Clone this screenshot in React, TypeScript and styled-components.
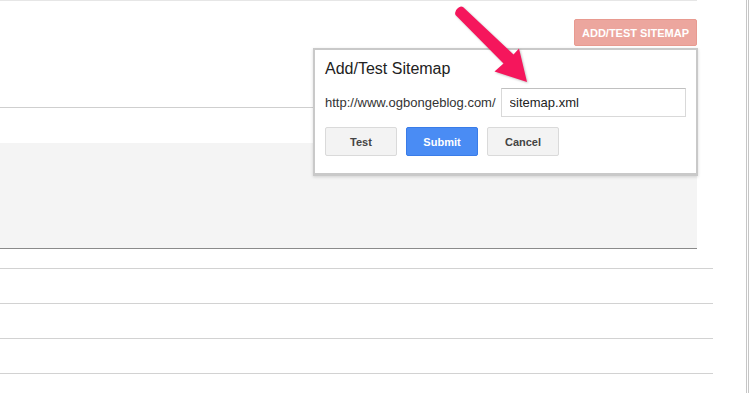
import React from "react";
import styled, { createGlobalStyle } from "styled-components";

const Global = createGlobalStyle`
  html, body { margin: 0; padding: 0; background: #fff; }
  body { font-family: "Liberation Sans", Arial, sans-serif; }
  * { box-sizing: border-box; }
`;

const Frame = styled.div`
  position: relative;
  width: 749px;
  height: 393px;
  overflow: hidden;
  display: flex;
  background: #fff;
`;

const Main = styled.div`
  width: 746px;
  display: flex;
  flex-direction: column;
`;

const WindowEdge = styled.div`
  width: 3px;
  border-left: 1px solid #c6c6c6;
  border-right: 1px solid #c6c6c6;
  background: #fff;
`;

const Header = styled.div`
  width: 697px;
  height: 108px;
  border-top: 1px solid #e6e6e6;
  border-bottom: 1px solid #cfcfcf;
  display: flex;
  justify-content: flex-end;
  align-items: flex-start;
  padding-top: 18px;
`;

const AddButton = styled.button`
  height: 27px;
  width: 123px;
  padding: 0;
  background: #eca69e;
  border: 1px solid #e89a90;
  border-radius: 2px;
  color: #fff;
  font-family: "Liberation Sans", Arial, sans-serif;
  font-weight: bold;
  font-size: 11px;
  text-transform: uppercase;
`;

const Panel = styled.div`
  width: 697px;
  height: 106px;
  margin-top: 35px;
  background: #f4f4f4;
  border-bottom: 1px solid #8a8a8a;
`;

const RowList = styled.div`
  width: 713px;
  margin-top: 19px;
  border-top: 1px solid #d2d2d2;
`;

const Row = styled.div`
  height: 35px;
  border-bottom: 1px solid #d2d2d2;
`;

const Dialog = styled.div`
  position: absolute;
  left: 313px;
  top: 48px;
  width: 385px;
  height: 128px;
  background: #fff;
  border: 2px solid #c9c9c9;
  border-bottom-width: 3px;
  box-shadow: 0 1px 3px rgba(0, 0, 0, 0.15);
  padding: 9px 10px 0 10px;
  display: flex;
  flex-direction: column;
`;

const Title = styled.div`
  font-size: 16px;
  line-height: 20px;
  color: #222;
`;

const UrlRow = styled.div`
  margin-top: 9px;
  display: flex;
  align-items: center;
  gap: 5px;
`;

const Prefix = styled.span`
  font-size: 13px;
  color: #333;
  white-space: nowrap;
`;

const Input = styled.input`
  flex: 1;
  min-width: 0;
  height: 29px;
  border: 1px solid #d9d9d9;
  border-top-color: #c0c0c0;
  padding: 0 8px;
  font-family: "Liberation Sans", Arial, sans-serif;
  font-size: 13px;
  color: #222;
  outline: none;
`;

const ButtonRow = styled.div`
  margin-top: 10px;
  display: flex;
  gap: 9px;
`;

const ActionButton = styled.button<{ $primary?: boolean }>`
  width: 72px;
  height: 29px;
  padding: 0;
  border-radius: 2px;
  font-family: "Liberation Sans", Arial, sans-serif;
  font-weight: bold;
  font-size: 11px;
  background: ${(p) => (p.$primary ? "#4a8cf4" : "#f3f3f3")};
  border: 1px solid ${(p) => (p.$primary ? "#3a7ce8" : "#dadada")};
  color: ${(p) => (p.$primary ? "#fff" : "#444")};
`;

const Arrow = styled.svg`
  position: absolute;
  left: 0;
  top: 0;
  pointer-events: none;
  filter: drop-shadow(1px 1px 1px rgba(0, 0, 0, 0.25));
`;

export default function App() {
  return (
    <>
      <Global />
      <Frame>
        <Main>
          <Header>
            <AddButton>Add/Test Sitemap</AddButton>
          </Header>
          <Panel />
          <RowList>
            <Row />
            <Row />
            <Row />
          </RowList>
        </Main>
        <WindowEdge />
        <Dialog>
          <Title>Add/Test Sitemap</Title>
          <UrlRow>
            <Prefix>http://www.ogbongeblog.com/</Prefix>
            <Input defaultValue="sitemap.xml" />
          </UrlRow>
          <ButtonRow>
            <ActionButton>Test</ActionButton>
            <ActionButton $primary>Submit</ActionButton>
            <ActionButton>Cancel</ActionButton>
          </ButtonRow>
        </Dialog>
        <Arrow width="749" height="393" viewBox="0 0 749 393">
          <path
            d="M458 8 Q460.5 5.5 463 7 L513.5 54.5 L519 48.5 L527 82 L494.5 71.5 L503.5 63.5 L455.5 15 Q454 11 458 8 Z"
            fill="#f5165c"
          />
        </Arrow>
      </Frame>
    </>
  );
}
